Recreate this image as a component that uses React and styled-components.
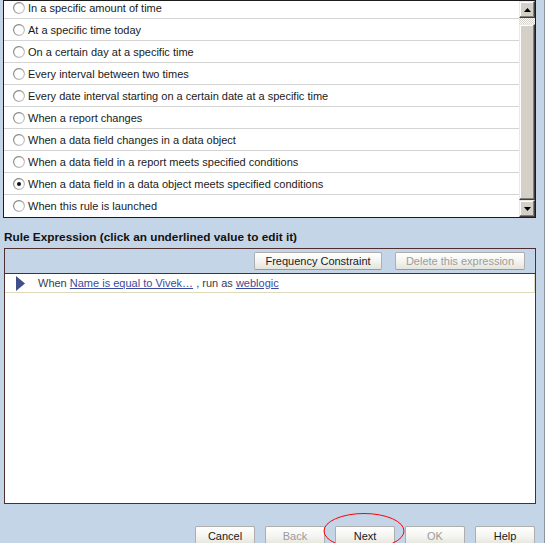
import React from "react";
import styled, { createGlobalStyle } from "styled-components";

const GlobalStyle = createGlobalStyle`
  html, body { margin: 0; padding: 0; background: #ffffff; overflow: hidden; }
  body { font-family: "Liberation Sans", Arial, sans-serif; font-size: 11px; color: #111; }
`;

const Panel = styled.div`
  position: relative;
  box-sizing: border-box;
  width: 545px;
  height: 543px;
  background: #c5d5e8;
  border-right: 1px solid #8e949c;
  padding: 0 8px 0 3px;
  display: flex;
  flex-direction: column;
  overflow: hidden;
  & > * { flex-shrink: 0; }
`;

const ListBox = styled.div`
  box-sizing: border-box;
  width: 533px;
  height: 218px;
  border: 1px solid #1c1c1c;
  background: #fff;
  display: flex;
`;

const ListViewport = styled.div`
  flex: 1;
  overflow: hidden;
`;

const ListInner = styled.div`
  margin-top: -4px;
`;

const Row = styled.label`
  height: 21px;
  border-bottom: 1px solid ${(p) => (p.$last ? "transparent" : "#d4d4d4")};
  display: flex;
  align-items: center;
  gap: 3px;
  padding-left: 9px;
  color: #1a1a1a;
  white-space: nowrap;
`;

const Scrollbar = styled.div`
  width: 16px;
  display: flex;
  flex-direction: column;
`;

const bevel = `
  box-sizing: border-box;
  background: #d4d0c8;
  border-top: 1px solid #ece9e2;
  border-left: 1px solid #ece9e2;
  border-right: 1px solid #404040;
  border-bottom: 1px solid #404040;
  box-shadow: inset -1px -1px 0 #808080, inset 1px 1px 0 #ffffff;
`;

const ScrollButton = styled.div`
  ${bevel}
  height: 17px;
  display: flex;
  align-items: center;
  justify-content: center;
`;

const Track = styled.div`
  flex: 1;
  display: flex;
  flex-direction: column;
  padding-top: 6px;
  background-color: #ffffff;
  background-image: repeating-conic-gradient(#d4d0c8 0 25%, #ffffff 0 50%);
  background-size: 2px 2px;
`;

const Thumb = styled.div`
  ${bevel}
  flex: 1;
`;

const Header = styled.div`
  margin-top: 12px;
  height: 14px;
  line-height: 14px;
  padding-left: 1px;
  font-weight: bold;
  font-size: 11.8px;
  color: #111;
  margin-bottom: 4px;
  white-space: nowrap;
`;

const ExprBox = styled.div`
  box-sizing: border-box;
  margin-left: 1px;
  width: 532px;
  height: 256px;
  border: 1px solid #4e2f2f;
  background: #fff;
  display: flex;
  flex-direction: column;
`;

const Toolbar = styled.div`
  height: 24px;
  background: #c5d5e8;
  border-bottom: 1px solid #4e2f2f;
  display: flex;
  align-items: center;
  justify-content: flex-end;
  gap: 13px;
  padding-right: 10px;
`;

const Button = styled.button`
  box-sizing: border-box;
  width: ${(p) => p.$w}px;
  height: ${(p) => p.$h || 18}px;
  padding: 0;
  font-family: "Liberation Sans", Arial, sans-serif;
  font-size: 11px;
  color: ${(p) => (p.disabled ? "#9c9c9c" : "#1a1a1a")};
  background: linear-gradient(#ffffff, #f3f3ef 55%, #e4e3dc);
  border: 1px solid #aeaeae;
  border-bottom-color: #9a9a9a;
  border-radius: 2px;
  line-height: 1;
`;

const ExprRow = styled.div`
  height: 18px;
  border-right: 1px solid #e2dec4;
  border-bottom: 1px solid #dcdab8;
  display: flex;
  align-items: center;
  padding-left: 11px;
  gap: 13px;
  white-space: nowrap;
  color: #3b3b4f;
`;

const ExprText = styled.span``;

const Link = styled.a`
  color: #3a4a9c;
  text-decoration: underline;
  cursor: pointer;
`;

const Footer = styled.div`
  margin-top: 22px;
  display: flex;
  justify-content: flex-end;
  gap: 10px;
  padding-right: 1px;
`;

const Overlay = styled.svg`
  position: absolute;
  left: 0;
  top: 0;
  pointer-events: none;
`;

const Radio = ({ checked }) => (
  <svg width="12" height="12" viewBox="0 0 12 12">
    <defs>
      <linearGradient id="rg" x1="0" y1="0" x2="1" y2="1">
        <stop offset="0" stopColor="#6a6a6a" />
        <stop offset="1" stopColor="#d2d2d2" />
      </linearGradient>
    </defs>
    <circle cx="6" cy="6" r="5.4" fill="#fff" stroke="url(#rg)" strokeWidth="1.1" />
    {checked && <circle cx="6" cy="6" r="2" fill="#111" />}
  </svg>
);

const Arrow = ({ down }) => (
  <svg width="7" height="4" viewBox="0 0 7 4">
    <path d={down ? "M0 0H7L3.5 4Z" : "M0 4H7L3.5 0Z"} fill="#000" />
  </svg>
);

const options = [
  "In a specific amount of time",
  "At a specific time today",
  "On a certain day at a specific time",
  "Every interval between two times",
  "Every date interval starting on a certain date at a specific time",
  "When a report changes",
  "When a data field changes in a data object",
  "When a data field in a report meets specified conditions",
  "When a data field in a data object meets specified conditions",
  "When this rule is launched",
];

export default function App() {
  return (
    <>
      <GlobalStyle />
      <Panel>
        <ListBox>
          <ListViewport>
            <ListInner>
              {options.map((o, i) => (
                <Row key={o} $last={i === options.length - 1}>
                  <Radio checked={i === 8} />
                  <span>{o}</span>
                </Row>
              ))}
            </ListInner>
          </ListViewport>
          <Scrollbar>
            <ScrollButton>
              <Arrow />
            </ScrollButton>
            <Track>
              <Thumb />
            </Track>
            <ScrollButton>
              <Arrow down />
            </ScrollButton>
          </Scrollbar>
        </ListBox>

        <Header>Rule Expression (click an underlined value to edit it)</Header>

        <ExprBox>
          <Toolbar>
            <Button $w={128}>Frequency Constraint</Button>
            <Button $w={130} disabled>
              Delete this expression
            </Button>
          </Toolbar>
          <ExprRow>
            <svg width="9" height="15" viewBox="0 0 9 15">
              <path d="M0 0L9 7.5L0 15Z" fill="#3e4f8a" />
            </svg>
            <ExprText>
              When <Link>Name is equal to Vivek…</Link> , run as <Link>weblogic</Link>
            </ExprText>
          </ExprRow>
        </ExprBox>

        <Footer>
          <Button $w={60} $h={20}>Cancel</Button>
          <Button $w={60} $h={20} disabled>Back</Button>
          <Button $w={60} $h={20}>Next</Button>
          <Button $w={60} $h={20} disabled>OK</Button>
          <Button $w={60} $h={20}>Help</Button>
        </Footer>

        <Overlay width="545" height="543" viewBox="0 0 545 543">
          <ellipse cx="364" cy="531" rx="40" ry="17.5" fill="none" stroke="#ff0000" strokeWidth="1" />
        </Overlay>
      </Panel>
    </>
  );
}
